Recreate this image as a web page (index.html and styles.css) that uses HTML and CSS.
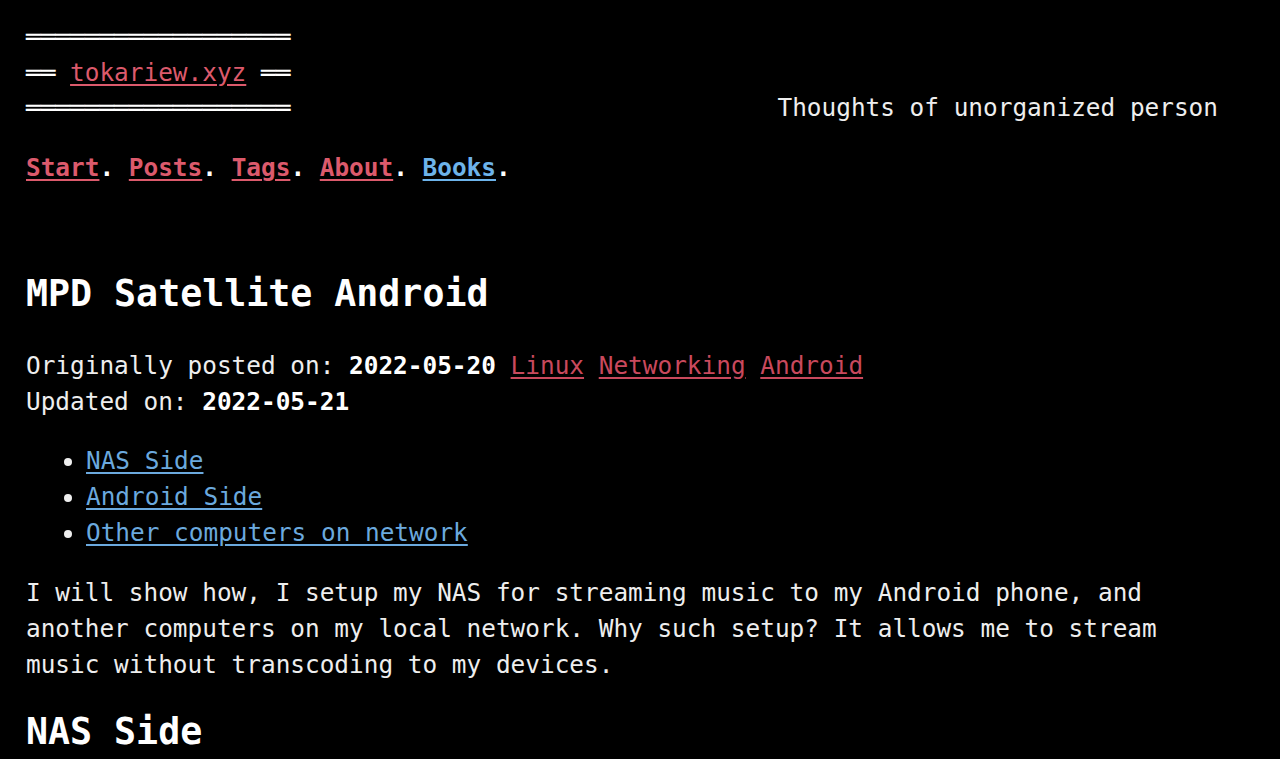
FILE: index.html
```html
<!DOCTYPE html>
<html lang="en">
<head>
    <meta charset="UTF-8">
    <meta name="viewport" content="width=device-width, initial-scale=1.0">
    <title>MPD Satellite Android - tokariew.xyz</title>
    <link rel="stylesheet" href="styles.css">
</head>
<body>
    <div class="wrap">
    <header class="top">
        <div class="logo">
            <div class="line">══════════════════</div>
            <div class="line">══ <a href="/">tokariew.xyz</a> ══</div>
            <div class="line">══════════════════</div>
        </div>
        <span class="tagline">Thoughts of unorganized person</span>
    </header>
    <nav class="menu">
        <a href="/">Start</a>. <a href="/posts">Posts</a>. <a href="/tags">Tags</a>. <a href="/about">About</a>. <a href="/books" class="seen">Books</a>.
    </nav>

    <main>
        <h1>MPD Satellite Android</h1>
        <p class="meta">Originally posted on: <b>2022-05-20</b> <a href="/tags/linux" class="tag">Linux</a> <a href="/tags/networking" class="tag">Networking</a> <a href="/tags/android" class="tag">Android</a><br>Updated on: <b>2022-05-21</b></p>

        <ul class="toc">
            <li><a href="#nas-side">NAS Side</a></li>
            <li><a href="#android-side">Android Side</a></li>
            <li><a href="#other-computers-on-network">Other computers on network</a></li>
        </ul>

        <p>I will show how, I setup my NAS for streaming music to my Android phone, and another computers on my local network. Why such setup? It allows me to stream music without transcoding to my devices.</p>

        <h2 id="nas-side">NAS Side</h2>
    </main>
    </div>
</body>
</html>
```

FILE: styles.css
```css
* {
    box-sizing: border-box;
}

body {
    margin: 0;
    background-color: #000;
    color: #eeeeee;
    font-family: "DejaVu Sans Mono", "Liberation Mono", monospace;
    font-size: 24.4px;
    line-height: 36px;
}

.wrap {
    padding: 0 62px 0 26px;
}

a {
    color: #dc5a6c;
    text-decoration: underline;
    text-underline-offset: 3px;
}

.top {
    display: flex;
    justify-content: space-between;
    align-items: flex-end;
    padding-top: 19px;
}

.logo {
    line-height: 35.5px;
    color: #ffffff;
}

.logo .line {
    white-space: pre;
}

.tagline {
    line-height: 35.5px;
}

.menu {
    margin-top: 24px;
    font-weight: bold;
    color: #ffffff;
}

.menu a {
    text-decoration-thickness: 2px;
}

.menu a.seen {
    color: #6db3ea;
}

h1, h2 {
    font-size: 36.6px;
    line-height: 44px;
    font-weight: bold;
    color: #ffffff;
}

h1 {
    margin: 86px 0 32px;
}

h2 {
    margin: 27px 0 0;
}

p {
    margin: 0;
}

.meta b {
    color: #ffffff;
}

.tag {
    color: #c9495d;
}

.toc {
    margin: 23px 0 24px;
    padding-left: 60px;
}

.toc a {
    color: #6ba9de;
}
```
